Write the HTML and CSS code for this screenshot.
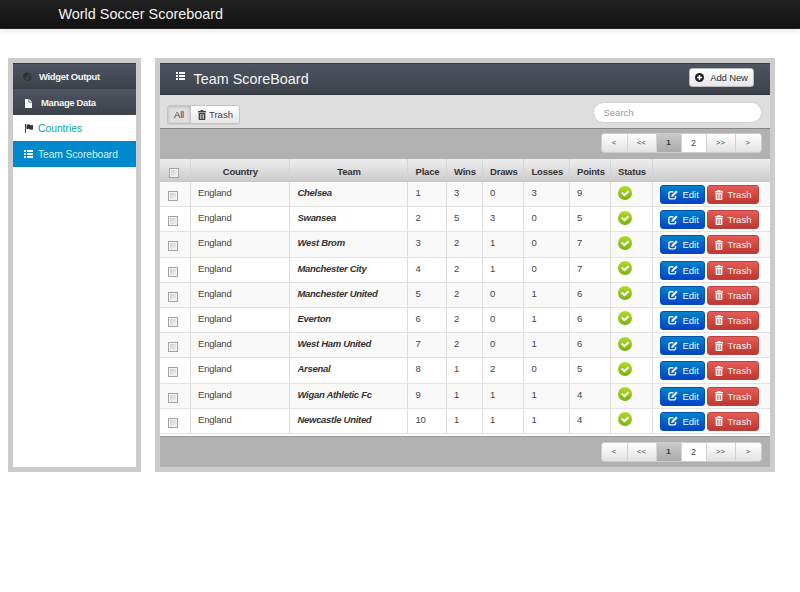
FILE: index.html
```html
<!DOCTYPE html>
<html lang="en">
<head>
<meta charset="utf-8">
<title>World Soccer Scoreboard</title>
<link rel="stylesheet" href="styles.css">
</head>
<body>
<svg class="defs" width="0" height="0" aria-hidden="true">
  <defs>
    <linearGradient id="green" x1="0" y1="0" x2="0" y2="1"><stop offset="0" stop-color="#b2dc28"/><stop offset="1" stop-color="#79b011"/></linearGradient>
    <symbol id="list" viewBox="0 0 9 8"><path fill="currentColor" d="M0 0h2v2H0zM3 0h6v2H3zM0 3h2v2H0zM3 3h6v2H3zM0 6h2v2H0zM3 6h6v2H3z"/></symbol>
    <symbol id="trash" viewBox="0 0 8 10"><path fill="currentColor" fill-rule="evenodd" d="M2.5 1V0h3v1H8v1.6H0V1zM.6 3h6.8v6.2q0 .8-.8.8H1.4q-.8 0-.8-.8zM2 4v5h.6V4zM3.7 4v5h.6V4zM5.4 4v5H6V4z"/></symbol>
    <symbol id="edit" viewBox="0 0 10 10"><path fill="none" stroke="currentColor" stroke-width="1.4" d="M5.4 1.7H2.8Q.9 1.7.9 3.6v3.4q0 1.900 1.900 1.900h2.900q1.900 0 1.900-1.900V6"/><path fill="currentColor" d="M8.2.4l1.5 1.5-4.4 4.5-2.2.7.7-2.3z"/></symbol>
    <symbol id="ok" viewBox="0 0 14 14"><circle cx="7" cy="7" r="7" fill="url(#green)"/><path d="M3.600 6.400l2.800 2.700 4.200-3.900" fill="none" stroke="#fff" stroke-width="2.1"/></symbol>
  </defs>
</svg>
<header class="navbar">World Soccer Scoreboard</header>
<main class="layout">
  <nav class="sidebar">
    <a class="item dark"><svg class="globe" viewBox="0 0 10 10"><circle cx="5" cy="5" r="4.3" fill="#42464c" stroke="#2b2e32" stroke-width="1"/><path d="M2 2l3-1 1 2-2 1-1 3-2-2zM6 5l2 0-1 3-1-1z" fill="#2b2e32"/></svg><span>Widget Output</span></a>
    <a class="item dark manage"><svg class="file" viewBox="0 0 7 9"><path fill="#fff" d="M0 0h3.5v3.5H7V9H0zM4.3 0L7 2.7H4.3z"/></svg><span>Manage Data</span></a>
    <a class="item link"><svg class="flag" viewBox="0 0 8 9"><path fill="#333" d="M0 0h.9v9H0zM1.5.8Q3.5-.3 5 .8t3 0v4.4q-1.5 1-3 0t-3.500 0z"/></svg><span>Countries</span></a>
    <a class="item current"><svg class="list"><use href="#list"/></svg><span>Team Scoreboard</span></a>
  </nav>
  <section class="panel">
    <div class="panel-head">
      <svg class="list"><use href="#list"/></svg>
      <h1>Team ScoreBoard</h1>
      <button class="btn add"><svg class="plus" viewBox="0 0 9 9"><circle cx="4.500" cy="4.500" r="4.500" fill="#222"/><path d="M4.500 2v5M2 4.500h5" stroke="#fff" stroke-width="1.500"/></svg><span>Add New</span></button>
    </div>
    <div class="toolbar">
      <div class="group"><button class="pressed">All</button><button class="trashed"><svg class="trash"><use href="#trash"/></svg>Trash</button></div>
      <input class="search" type="text" placeholder="Search">
    </div>
    <div class="pager-bar top"><div class="pager"><a>&lt;</a><a>&lt;&lt;</a><a class="on">1</a><a class="two">2</a><a>&gt;&gt;</a><a>&gt;</a></div></div>
    <div class="grid" id="grid">
      <div class="row head"><div class="check"><i class="box"></i></div><div class="mid">Country</div><div class="mid">Team</div><div>Place</div><div>Wins</div><div>Draws</div><div>Losses</div><div>Points</div><div>Status</div><div></div></div>
    </div>
    <div class="pager-bar bottom"><div class="pager"><a>&lt;</a><a>&lt;&lt;</a><a class="on">1</a><a class="two">2</a><a>&gt;&gt;</a><a>&gt;</a></div></div>
  </section>
</main>
<script src="app.js"></script>
</body>
</html>
```
FILE: app.js
```js
const teams = [
  ["Chelsea", 1, 3, 0, 3, 9],
  ["Swansea", 2, 5, 3, 0, 5],
  ["West Brom", 3, 2, 1, 0, 7],
  ["Manchester City", 4, 2, 1, 0, 7],
  ["Manchester United", 5, 2, 0, 1, 6],
  ["Everton", 6, 2, 0, 1, 6],
  ["West Ham United", 7, 2, 0, 1, 6],
  ["Arsenal", 8, 1, 2, 0, 5],
  ["Wigan Athletic Fc", 9, 1, 1, 1, 4],
  ["Newcastle United", 10, 1, 1, 1, 4]
];
document.getElementById("grid").insertAdjacentHTML("beforeend", teams.map(([name, ...stats]) =>
  `<div class="row"><div class="check"><i class="box"></i></div><div>England</div><div class="team">${name}</div>` +
  stats.map(n => `<div>${n}</div>`).join("") +
  `<div class="status"><svg class="ok"><use href="#ok"/></svg></div>
   <div class="actions"><button class="act edit"><svg class="pen"><use href="#edit"/></svg>Edit</button><button class="act del"><svg class="trash"><use href="#trash"/></svg>Trash</button></div></div>`
).join(""));
```
FILE: styles.css
```css
* { box-sizing: border-box; }
body { margin: 0; background: #fff; font: 9.500px/13px "Liberation Sans", Arial, sans-serif; letter-spacing: -.2px; color: #444; }
button, input { font: inherit; letter-spacing: inherit; color: inherit; margin: 0; padding: 0; border: 0; }
svg { flex: none; display: block; }
.defs { position: absolute; }
.navbar { height: 29px; padding-left: 58.5px; background: linear-gradient(#222, #111); border-bottom: 1px solid #252525; box-shadow: 0 1px 6px rgba(0,0,0,.12); color: #f2f2f2; font-size: 14.4px; letter-spacing: 0; line-height: 29px; }
.layout { display: flex; align-items: flex-start; gap: 14px; padding: 28.500px 0 0 8px; }
.sidebar { width: 133px; height: 414px; border: 5px solid #ccc; }
.item { display: flex; align-items: center; height: 26px; padding: 1px 0 0 10px; }
.dark { background: linear-gradient(#4e5561, #3d4149); color: #f4f4f4; font-weight: bold; letter-spacing: -.35px; }
.manage { padding-top: 2px; }
.item:first-child { border-top: 1px solid #343942; }
.globe { width: 9px; height: 9px; margin-right: 7px; }
.file { width: 7px; height: 9px; margin: 2px 9px 0 2px; }
.flag { width: 8px; height: 9px; margin: -1px 5px 0 2px; }
.link { color: #0aa39b; font-size: 10.300px; letter-spacing: 0; padding-top: 2px; }
.current { background: #08c; color: #c9f5ee; font-size: 10.300px; letter-spacing: -.1px; padding-top: 2px; }
.list { width: 9px; height: 8px; }
.current .list { margin: -1px 5px 0 1px; color: #fff; }
.panel { width: 619.500px; height: 414px; border: 5px solid #ccc; background: #b1b1b1; }
.panel-head { display: flex; height: 32.500px; padding: 0 15.500px; background: linear-gradient(#4e5561, #3d4149); border-top: 1px solid #343942; border-bottom: 1px solid #30343b; color: #f6f6f6; }
.panel-head .list { margin: 8.500px 9px 0 0; }
h1 { margin: 0; font-size: 14.300px; letter-spacing: .05px; font-weight: normal; line-height: 31px; }
.btn { background: linear-gradient(#fff, #e6e6e6); border: 1px solid #bbb; border-radius: 3px; }
.add { display: flex; align-items: center; justify-content: center; width: 65px; height: 19px; margin: 4px 0 0 auto; color: #333; gap: 6px; letter-spacing: -.15px; }
.plus { width: 9px; height: 9px; }
.toolbar { display: flex; justify-content: space-between; height: 33px; padding: 7px 8px 0 7px; background: #dedede; }
.group { display: flex; height: 19px; margin-top: 3px; border: 1px solid #c4c4c4; border-radius: 3px; overflow: hidden; box-shadow: 0 1px 1px rgba(0,0,0,.08); }
.group button { background: linear-gradient(#fff, #e6e6e6); }
.group .pressed { width: 23px; background: #dedede; border-right: 1px solid #c4c4c4; box-shadow: inset 0 1px 3px rgba(0,0,0,.18); }
.group .trashed { display: flex; align-items: center; gap: 3px; width: 48px; padding-left: 7px; letter-spacing: 0; }
.trash { width: 8px; height: 10px; }
.search { width: 169px; height: 21px; padding: 0 10px; border: 1px solid #d2d2d2; border-radius: 11px; background: #fff; letter-spacing: 0; }
.search::placeholder { color: #999; opacity: 1; }
.pager-bar { display: flex; justify-content: flex-end; padding-right: 8px; background: #b1b1b1; border-top: 1px solid #858585; }
.top { height: 30.500px; padding-top: 4px; }
.bottom { height: 31px; padding-top: 5px; border-color: #999; }
.grid { background: #fff; padding-bottom: 2px; }
.pager { display: flex; height: 20px; border: 1px solid #ccc; border-radius: 3px; overflow: hidden; width: 161px; letter-spacing: 0; }
.pager a { flex: 0 0 26px; background: linear-gradient(#fff, #e2e2e2); border-right: 1px solid #d2d2d2; text-align: center; line-height: 18px; font-size: 7.500px; color: #444; }
.pager a:nth-child(2), .pager a:nth-child(5) { flex-basis: 29px; }
.pager .on { flex-basis: 25px; background: linear-gradient(#c9c9c9, #aaa); color: #333; font-weight: bold; font-size: 8px; }
.pager .two { flex-basis: 25px; background: #fff; font-size: 9px; }
.pager a:last-child { border: 0; flex: 1; }
.row { display: grid; grid-template-columns: 30.500px 99.500px 118px 38.500px 36px 41.500px 45.500px 41px 42px 1fr; height: 25.200px; background: #fff; border-bottom: 1px solid #e2e2e2; }
.row:nth-child(even) { background: #f9f9f9; }
.row > div { padding: 4px 0 0 7.500px; border-right: 1px solid #ddd; }
.row > div:last-child { border-right: 0; }
.row .check { padding: 9px 0 0 8px; }
.row.head { height: 23.500px; background: linear-gradient(#eee, #ccc); border-bottom: 1px solid #c8c8c8; color: #333; font-weight: bold; }
.row.head > div { padding-top: 6px; border-color: #d3d3d3; }
.row.head .mid { padding-left: 1px; text-align: center; }
.row.head .check { padding: 9px 0 0 9px; }
.box { display: block; width: 10px; height: 10px; border: 1px solid #a2a2a2; background: linear-gradient(135deg, #c9c9c9, #f8f8f8); box-shadow: inset 0 0 0 1px #f4f4f4; }
.row .team { font-weight: bold; font-style: italic; color: #333; letter-spacing: -.3px; }
.row .status { padding-top: 3.500px; }
.ok { width: 14px; height: 14px; }
.row .actions { display: flex; gap: 2px; padding: 3px 0 0 7px; }
.act { display: flex; align-items: center; height: 19px; border-radius: 3px; color: #f4f4f4; letter-spacing: 0; }
.edit { width: 45px; padding-left: 7px; gap: 5px; background: linear-gradient(#0083cc, #0044c4); border: 1px solid #0550ad; }
.del { width: 52.500px; padding-left: 7px; gap: 5px; background: linear-gradient(#e65b56, #be3731); border: 1px solid #b8423d; }
.pen { width: 10px; height: 10px; }
```
